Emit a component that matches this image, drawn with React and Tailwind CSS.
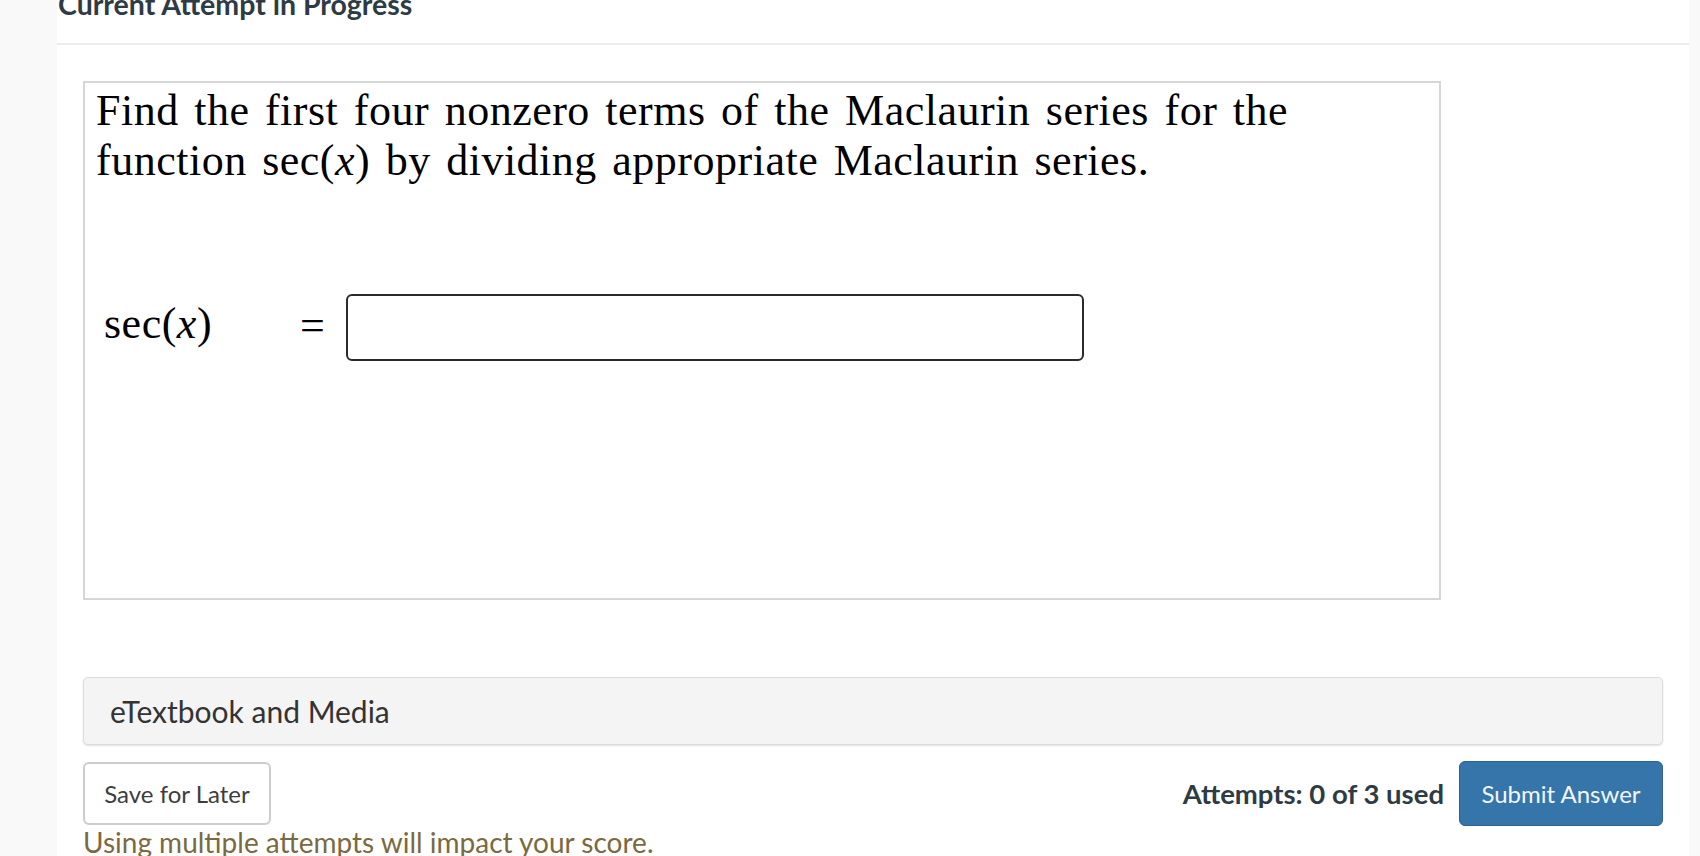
export default function App() {
  const serif = { fontFamily: '"Liberation Serif", "Times New Roman", serif' };
  return (
    <div className="flex h-[856px] w-full overflow-hidden bg-[#f9f9f9]" style={{ fontFamily: 'Lato, "Noto Sans", sans-serif' }}>
      <div className="w-[57px] shrink-0 bg-[#f9f9f9]" />
      <div className="w-[1632px] shrink-0 bg-white">
        <h1 className="-mt-[13px] text-[28.5px] font-bold leading-[34px] text-[#2d3b45] pl-[1px]">Current Attempt in Progress</h1>
        <div className="mt-[22px] h-[2px] bg-[#ececec]" />
        <div className="pl-[26px] pr-[26px]">
          <div className="mt-[36px] h-[519px] w-[1358px] border-2 border-[#d6d6d6] pl-[11px] pt-[3px]" style={serif}>
            <div className="text-[44px] leading-[50px] tracking-[0.5px] text-black [word-spacing:4px]">
              <div>Find the first four nonzero terms of the Maclaurin series for the</div>
              <div>
                function sec(<i>x</i>) by dividing appropriate Maclaurin series.
              </div>
            </div>
            <div className="mt-[108px] flex items-center">
              <span className="mb-[8px] ml-[8px] w-[196px] text-[44px] leading-[50px] tracking-[0.5px] text-black">
                sec(<i>x</i>)
              </span>
              <span className="mb-[4px] text-[44px] leading-[50px] text-black">=</span>
              <div className="ml-[21px] h-[67px] w-[738px] rounded-[6px] border-2 border-[#2b2b2b] bg-white" />
            </div>
          </div>

          <div className="mt-[77px] flex h-[68px] w-[1580px] items-center rounded-[5px] border border-[#dcdcdc] bg-[#f4f4f4] pl-[26px] shadow-[0_1px_2px_rgba(0,0,0,0.12)]">
            <span className="text-[30px] text-[#333333]">eTextbook and Media</span>
          </div>

          <div className="mt-[16px] flex w-[1580px] items-center justify-between">
            <button className="flex h-[63px] w-[188px] items-center justify-center rounded-[6px] border-2 border-[#cccccc] bg-white text-[24px] text-[#3d3d3d]">
              Save for Later
            </button>
            <div className="flex items-center gap-[15px]">
              <span className="text-[27.5px] font-bold text-[#2d3b45]">Attempts: 0 of 3 used</span>
              <button className="flex h-[65px] w-[204px] items-center justify-center rounded-[6px] border border-[#2c6391] bg-[#3575a9] text-[24px] text-[#f2f6fa]">
                Submit Answer
              </button>
            </div>
          </div>
          <div className="-mt-[1px] text-[28px] leading-[34px] text-[#7b6a3f]">Using multiple attempts will impact your score.</div>
        </div>
      </div>
      <div className="flex-1 bg-[#f9f9f9]" />
    </div>
  );
}
